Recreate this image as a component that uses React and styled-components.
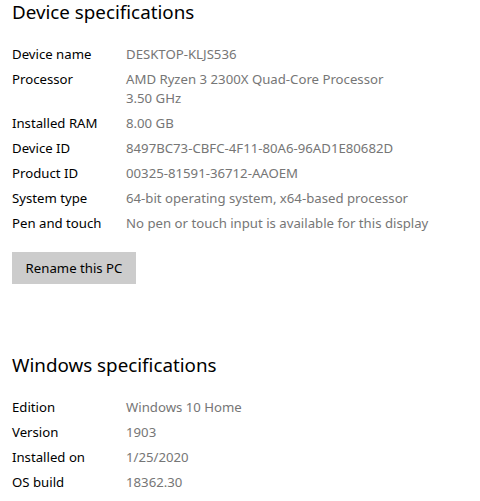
import React from "react";
import styled, { createGlobalStyle } from "styled-components";

const Global = createGlobalStyle`
  html, body { margin: 0; padding: 0; background: #ffffff; }
  body { font-family: "Segoe UI", "Noto Sans", "Open Sans", sans-serif; }
`;

const Page = styled.div`
  padding: 0 12px;
  width: 480px;
  height: 501px;
  box-sizing: border-box;
  overflow: hidden;
`;

const Section = styled.section`
  display: flex;
  flex-direction: column;
  margin-top: ${(p) => p.$top || 0}px;
`;

const Heading = styled.h2`
  margin: 0;
  font-size: 18.8px;
  font-weight: 400;
  line-height: 24px;
  color: #000;
  margin-bottom: ${(p) => p.$gap || 16}px;
`;

const Specs = styled.dl`
  display: grid;
  grid-template-columns: 114px 1fr;
  row-gap: 6px;
  margin: 0;
  font-size: 13.2px;
  line-height: 19px;
`;

const Label = styled.dt`
  margin: 0;
  color: #000;
`;

const Value = styled.dd`
  margin: 0;
  color: #767676;
`;

const Button = styled.button`
  margin-top: 19px;
  align-self: flex-start;
  width: 124px;
  height: 32px;
  border: none;
  background: #cccccc;
  color: #000;
  font-family: inherit;
  font-size: 13.2px;
  padding: 0;
`;

const device = [
  ["Device name", ["DESKTOP-KLJS536"]],
  ["Processor", ["AMD Ryzen 3 2300X Quad-Core Processor", "3.50 GHz"]],
  ["Installed RAM", ["8.00 GB"]],
  ["Device ID", ["8497BC73-CBFC-4F11-80A6-96AD1E80682D"]],
  ["Product ID", ["00325-81591-36712-AAOEM"]],
  ["System type", ["64-bit operating system, x64-based processor"]],
  ["Pen and touch", ["No pen or touch input is available for this display"]],
];

const windows = [
  ["Edition", ["Windows 10 Home"]],
  ["Version", ["1903"]],
  ["Installed on", ["1/25/2020"]],
  ["OS build", ["18362.30"]],
];

const SpecList = ({ items }) => (
  <Specs>
    {items.map(([k, v]) => (
      <React.Fragment key={k}>
        <Label>{k}</Label>
        <Value>
          {v.map((line, i) => (
            <div key={i}>{line}</div>
          ))}
        </Value>
      </React.Fragment>
    ))}
  </Specs>
);

export default function App() {
  return (
    <Page>
      <Global />
      <Section>
        <Heading $gap={21}>Device specifications</Heading>
        <SpecList items={device} />
        <Button>Rename this PC</Button>
      </Section>
      <Section $top={69}>
        <Heading $gap={21}>Windows specifications</Heading>
        <SpecList items={windows} />
      </Section>
    </Page>
  );
}
